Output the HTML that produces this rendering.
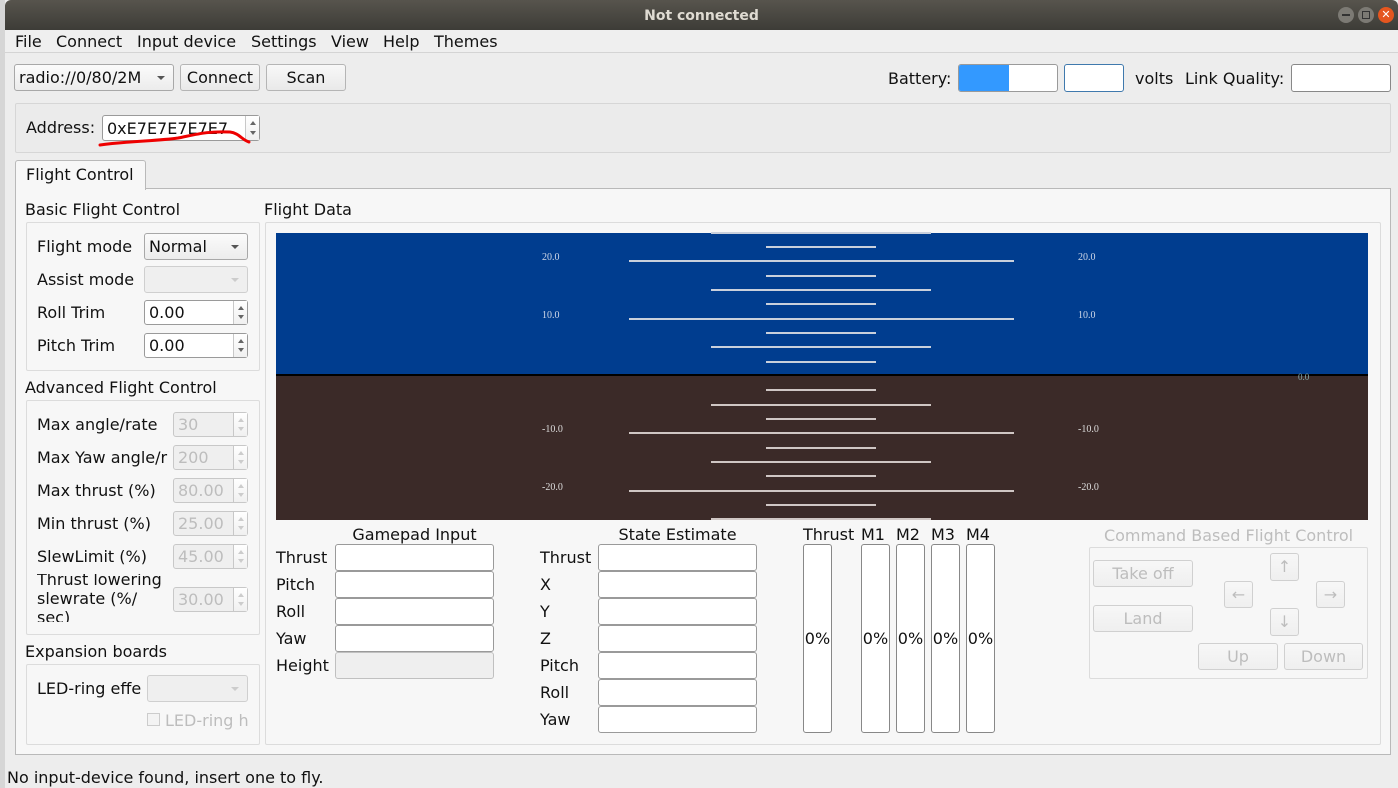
<!DOCTYPE html>
<html><head><meta charset="utf-8"><style>
*{box-sizing:border-box;margin:0;padding:0}
body{width:1398px;height:788px;overflow:hidden;background:#ededed;font-family:"DejaVu Sans","Liberation Sans",sans-serif;font-size:16px;color:#111;position:relative}
.a{position:absolute;white-space:nowrap}
.t{position:absolute;white-space:nowrap;line-height:20px;margin-top:1px}
.in{position:absolute;background:#fff;border:1px solid #9a9a9a;border-radius:3px}
.btn{position:absolute;border:1px solid #b5b5b5;border-radius:3px;background:linear-gradient(#f8f8f8,#e9e9e9);text-align:center;line-height:26px}
.dis{color:#bdbdbd;border-color:#d0d0d0;background:linear-gradient(#f7f7f7,#efefef)}
.box{position:absolute;border:1px solid #dcdcdc;border-radius:2px}
.spin{position:absolute;background:#fff;border:1px solid #9a9a9a;border-radius:3px;padding-left:4px;line-height:24px}
.spin:after{content:"";position:absolute;right:0;top:0;bottom:0;width:13px;border-left:1px solid #c8c8c8;background:linear-gradient(#fff,#f0f0f0)}
.spin i{position:absolute;right:3px;width:0;height:0;border-left:3.5px solid transparent;border-right:3.5px solid transparent;z-index:2}
.spin i.u{top:5px;border-bottom:4px solid #666}
.spin i.d{bottom:5px;border-top:4px solid #666}
.spin.ds{background:#efefef;color:#bdbdbd;border-color:#c8c8c8}
.spin.ds i.u{border-bottom-color:#ccc}.spin.ds i.d{border-top-color:#ccc}
.combo{position:absolute;border:1px solid #a8a8a8;border-radius:3px;background:linear-gradient(#fbfbfb,#ececec);padding-left:4px;line-height:26px}
.combo:after{content:"";position:absolute;right:8px;top:11px;border-left:4px solid transparent;border-right:4px solid transparent;border-top:4px solid #555}
.combo.ds{border-color:#cfcfcf;background:#efefef}.combo.ds:after{border-top-color:#ccc}
.bar{position:absolute;top:544px;height:189px;width:29px;background:#fff;border:1px solid #888;border-radius:3px;text-align:center;line-height:187px}
.hl{position:absolute;height:2px;background:#c9d0dc}
.hb{background:#cfc6c4}
.lb{position:absolute;font-family:"Liberation Serif",serif;font-size:10px;color:#cfd8e8;margin-top:1px}
</style></head><body>
<div class="a" style="left:0;top:0;width:5px;height:788px;background:#d6d6d6"></div>
<div class="a" style="left:5px;top:0;width:1393px;height:30px;background:linear-gradient(#57544d,#3d3c37);border-radius:6px 6px 0 0"></div>
<div class="t" style="left:5px;width:1393px;top:5px;text-align:center;color:#dfdbd2;font-weight:bold;font-size:14px">Not connected</div>
<div class="a" style="left:1338px;top:7px;width:16px;height:16px;border-radius:8px;background:#7c7a74"></div>
<div class="a" style="left:1358px;top:7px;width:16px;height:16px;border-radius:8px;background:#7c7a74"></div>
<div class="a" style="left:1378px;top:7px;width:16px;height:16px;border-radius:8px;background:#e5561f;color:#fff;font-size:11px;line-height:16px;text-align:center">✕</div>
<div class="a" style="left:1342px;top:14px;width:8px;height:2px;background:#333"></div>
<div class="a" style="left:1362px;top:11px;width:8px;height:8px;border:1px solid #333"></div>
<div class="a" style="left:5px;top:30px;width:1393px;height:23px;background:#efefef;border-bottom:1px solid #d4d4d4"></div>
<div class="t" style="left:15px;top:31px">File</div>
<div class="t" style="left:56px;top:31px">Connect</div>
<div class="t" style="left:137px;top:31px">Input device</div>
<div class="t" style="left:251px;top:31px">Settings</div>
<div class="t" style="left:331px;top:31px">View</div>
<div class="t" style="left:383px;top:31px">Help</div>
<div class="t" style="left:434px;top:31px">Themes</div>
<div class="combo" style="left:14px;top:64px;width:160px;height:27px">radio://0/80/2M</div>
<div class="btn" style="left:180px;top:64px;width:80px;height:27px">Connect</div>
<div class="btn" style="left:266px;top:64px;width:80px;height:27px">Scan</div>
<div class="t" style="left:888px;top:68px">Battery:</div>
<div class="in" style="left:958px;top:64px;width:100px;height:28px;overflow:hidden"><div style="width:50px;height:100%;background:#3399ff"></div></div>
<div class="in" style="left:1064px;top:64px;width:60px;height:28px;border-color:#3f79ad"></div>
<div class="t" style="left:1135px;top:68px">volts</div>
<div class="t" style="left:1185px;top:68px">Link Quality:</div>
<div class="in" style="left:1291px;top:64px;width:100px;height:28px;border-color:#888"></div>
<div class="a" style="left:15px;top:103px;width:1376px;height:50px;border:1px solid #d6d6d6;background:#ebebeb;border-radius:2px"></div>
<div class="t" style="left:26px;top:117px">Address:</div>
<div class="spin" style="left:102px;top:115px;width:158px;height:26px;line-height:26px">0xE7E7E7E7E7<i class="u"></i><i class="d"></i></div>
<svg class="a" style="left:98px;top:128px" width="155" height="20"><path d="M2 17 C30 13 60 13 80 10 C100 6 110 3 132 4 C141 5 144 12 151 14" stroke="#e00" stroke-width="3" fill="none" stroke-linecap="round"/></svg>
<div class="a" style="left:15px;top:188px;width:1376px;height:567px;background:#f7f7f7;border:1px solid #b9b9b9"></div>
<div class="a" style="left:15px;top:160px;width:131px;height:30px;background:#f7f7f7;border:1px solid #b9b9b9;border-bottom:none;border-radius:3px 3px 0 0"></div>
<div class="t" style="left:26px;top:164px">Flight Control</div>
<div class="t" style="left:25px;top:199px">Basic Flight Control</div>
<div class="box" style="left:26px;top:222px;width:234px;height:149px"></div>
<div class="t" style="left:37px;top:236px">Flight mode</div>
<div class="combo" style="left:144px;top:233px;width:104px;height:27px">Normal</div>
<div class="t" style="left:37px;top:269px">Assist mode</div>
<div class="combo ds" style="left:144px;top:266px;width:104px;height:27px"></div>
<div class="t" style="left:37px;top:302px">Roll Trim</div>
<div class="spin" style="left:144px;top:300px;width:104px;height:25px">0.00<i class="u"></i><i class="d"></i></div>
<div class="t" style="left:37px;top:335px">Pitch Trim</div>
<div class="spin" style="left:144px;top:333px;width:104px;height:25px">0.00<i class="u"></i><i class="d"></i></div>
<div class="t" style="left:25px;top:377px">Advanced Flight Control</div>
<div class="box" style="left:26px;top:400px;width:234px;height:235px"></div>
<div class="t" style="left:37px;top:414px">Max angle/rate</div>
<div class="spin ds" style="left:173px;top:412px;width:75px;height:25px">30<i class="u"></i><i class="d"></i></div>
<div class="t" style="left:37px;top:447px">Max Yaw angle/r</div>
<div class="spin ds" style="left:173px;top:445px;width:75px;height:25px">200<i class="u"></i><i class="d"></i></div>
<div class="t" style="left:37px;top:480px">Max thrust (%)</div>
<div class="spin ds" style="left:173px;top:478px;width:75px;height:25px">80.00<i class="u"></i><i class="d"></i></div>
<div class="t" style="left:37px;top:513px">Min thrust (%)</div>
<div class="spin ds" style="left:173px;top:511px;width:75px;height:25px">25.00<i class="u"></i><i class="d"></i></div>
<div class="t" style="left:37px;top:546px">SlewLimit (%)</div>
<div class="spin ds" style="left:173px;top:544px;width:75px;height:25px">45.00<i class="u"></i><i class="d"></i></div>
<div class="a" style="left:37px;top:574px;width:135px;height:48px;overflow:hidden"><div style="position:absolute;top:-4px;left:0;line-height:19px">Thrust lowering<br>slewrate (%/<br>sec)</div></div>
<div class="spin ds" style="left:173px;top:587px;width:75px;height:25px">30.00<i class="u"></i><i class="d"></i></div>
<div class="t" style="left:25px;top:641px">Expansion boards</div>
<div class="box" style="left:26px;top:664px;width:234px;height:81px"></div>
<div class="t" style="left:37px;top:678px">LED-ring effe</div>
<div class="combo ds" style="left:147px;top:675px;width:101px;height:27px"></div>
<div class="a" style="left:147px;top:713px;width:13px;height:13px;border:1px solid #ccc;background:#f3f3f3"></div>
<div class="t" style="left:165px;top:710px;color:#bdbdbd">LED-ring h</div>
<div class="t" style="left:264px;top:199px">Flight Data</div>
<div class="box" style="left:265px;top:222px;width:1116px;height:523px"></div>
<div class="a" style="left:276px;top:233px;width:1092px;height:143px;background:#003d8f"></div>
<div class="a" style="left:276px;top:374px;width:1092px;height:146px;background:#3b2a28"></div>
<div class="a" style="left:276px;top:374px;width:1092px;height:2px;background:#000"></div>
<div class="hl" style="left:711px;top:232px;width:220px"></div>
<div class="hl" style="left:766px;top:246px;width:110px"></div>
<div class="hl" style="left:629px;top:260px;width:385px"></div>
<div class="hl" style="left:766px;top:275px;width:110px"></div>
<div class="hl" style="left:711px;top:289px;width:220px"></div>
<div class="hl" style="left:766px;top:303px;width:110px"></div>
<div class="hl" style="left:629px;top:318px;width:385px"></div>
<div class="hl" style="left:766px;top:332px;width:110px"></div>
<div class="hl" style="left:711px;top:346px;width:220px"></div>
<div class="hl" style="left:766px;top:361px;width:110px"></div>
<div class="hl hb" style="left:766px;top:389px;width:110px"></div>
<div class="hl hb" style="left:711px;top:404px;width:220px"></div>
<div class="hl hb" style="left:766px;top:418px;width:110px"></div>
<div class="hl hb" style="left:629px;top:432px;width:385px"></div>
<div class="hl hb" style="left:766px;top:447px;width:110px"></div>
<div class="hl hb" style="left:711px;top:461px;width:220px"></div>
<div class="hl hb" style="left:766px;top:475px;width:110px"></div>
<div class="hl hb" style="left:629px;top:490px;width:385px"></div>
<div class="hl hb" style="left:766px;top:504px;width:110px"></div>
<div class="hl hb" style="left:711px;top:518px;width:220px"></div>
<div class="lb" style="left:542px;top:251px">20.0</div><div class="lb" style="left:1078px;top:251px">20.0</div>
<div class="lb" style="left:542px;top:309px">10.0</div><div class="lb" style="left:1078px;top:309px">10.0</div>
<div class="lb" style="left:542px;top:423px;color:#ddd">-10.0</div><div class="lb" style="left:1078px;top:423px;color:#ddd">-10.0</div>
<div class="lb" style="left:542px;top:481px;color:#ddd">-20.0</div><div class="lb" style="left:1078px;top:481px;color:#ddd">-20.0</div>
<div class="lb" style="left:1298px;top:371px;font-size:9px;color:#8aa">0.0</div>
<div class="t" style="left:335px;width:159px;text-align:center;top:524px">Gamepad Input</div>
<div class="t" style="left:276px;top:547px">Thrust</div><div class="in" style="left:335px;top:544px;width:159px;height:27px"></div>
<div class="t" style="left:276px;top:574px">Pitch</div><div class="in" style="left:335px;top:571px;width:159px;height:27px"></div>
<div class="t" style="left:276px;top:601px">Roll</div><div class="in" style="left:335px;top:598px;width:159px;height:27px"></div>
<div class="t" style="left:276px;top:628px">Yaw</div><div class="in" style="left:335px;top:625px;width:159px;height:27px"></div>
<div class="t" style="left:276px;top:655px">Height</div><div class="in" style="left:335px;top:652px;width:159px;height:27px;background:#efefef;border-color:#c0c0c0"></div>
<div class="t" style="left:598px;width:159px;text-align:center;top:524px">State Estimate</div>
<div class="t" style="left:540px;top:547px">Thrust</div><div class="in" style="left:598px;top:544px;width:159px;height:27px"></div>
<div class="t" style="left:540px;top:574px">X</div><div class="in" style="left:598px;top:571px;width:159px;height:27px"></div>
<div class="t" style="left:540px;top:601px">Y</div><div class="in" style="left:598px;top:598px;width:159px;height:27px"></div>
<div class="t" style="left:540px;top:628px">Z</div><div class="in" style="left:598px;top:625px;width:159px;height:27px"></div>
<div class="t" style="left:540px;top:655px">Pitch</div><div class="in" style="left:598px;top:652px;width:159px;height:27px"></div>
<div class="t" style="left:540px;top:682px">Roll</div><div class="in" style="left:598px;top:679px;width:159px;height:27px"></div>
<div class="t" style="left:540px;top:709px">Yaw</div><div class="in" style="left:598px;top:706px;width:159px;height:27px"></div>
<div class="t" style="left:803px;top:524px">Thrust</div>
<div class="t" style="left:861px;top:524px">M1</div><div class="t" style="left:896px;top:524px">M2</div><div class="t" style="left:931px;top:524px">M3</div><div class="t" style="left:966px;top:524px">M4</div>
<div class="bar" style="left:803px">0%</div>
<div class="bar" style="left:861px">0%</div>
<div class="bar" style="left:896px">0%</div>
<div class="bar" style="left:931px">0%</div>
<div class="bar" style="left:966px">0%</div>
<div class="t" style="left:1089px;width:279px;text-align:center;top:525px;color:#bdbdbd">Command Based Flight Control</div>
<div class="box" style="left:1089px;top:547px;width:279px;height:132px"></div>
<div class="btn dis" style="left:1093px;top:560px;width:100px;height:27px">Take off</div>
<div class="btn dis" style="left:1093px;top:605px;width:100px;height:27px">Land</div>
<div class="btn dis" style="left:1270px;top:553px;width:29px;height:28px">↑</div>
<div class="btn dis" style="left:1224px;top:581px;width:29px;height:27px">←</div>
<div class="btn dis" style="left:1316px;top:581px;width:29px;height:27px">→</div>
<div class="btn dis" style="left:1270px;top:608px;width:29px;height:28px">↓</div>
<div class="btn dis" style="left:1198px;top:643px;width:80px;height:27px">Up</div>
<div class="btn dis" style="left:1284px;top:643px;width:79px;height:27px">Down</div>
<div class="t" style="left:7px;top:767px">No input-device found, insert one to fly.</div>
</body></html>
